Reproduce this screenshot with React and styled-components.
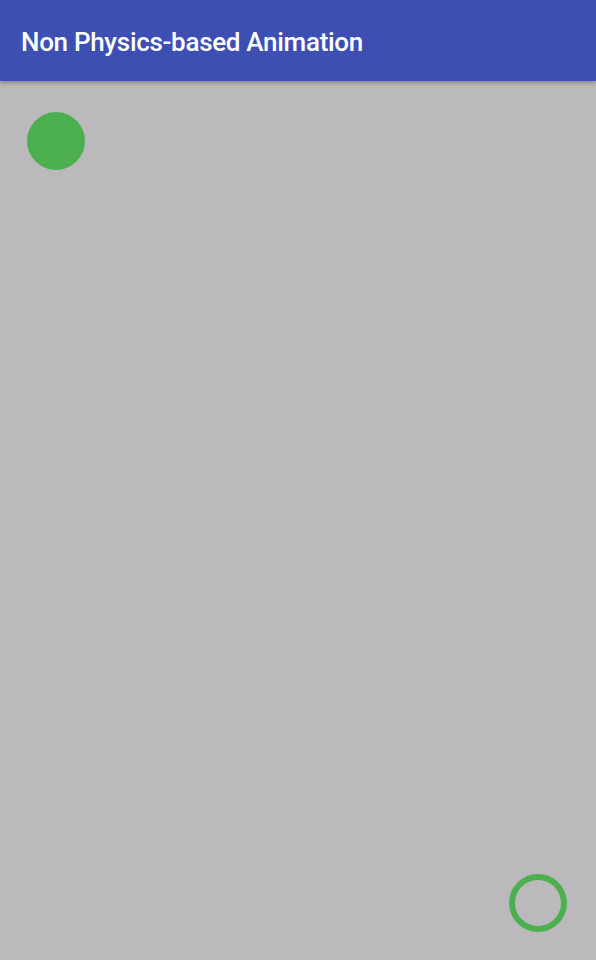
import React from 'react'
import styled, { createGlobalStyle } from 'styled-components'

const Global = createGlobalStyle`
  html, body {
    margin: 0;
    padding: 0;
    background: #bbb9bc;
  }
  body {
    font-family: Roboto, "Noto Sans", sans-serif;
  }
`

function App() {
  return (
    <>
      <Global />
      <Screen>
        <AppBar>
          <Title>Non Physics-based Animation</Title>
        </AppBar>
        <Stage>
          <Ball />
          <Target />
        </Stage>
      </Screen>
    </>
  )
}

export default App

const Screen = styled.div`
  width: 596px;
  height: 960px;
  display: flex;
  flex-direction: column;
  overflow: hidden;
`

const AppBar = styled.header`
  height: 81px;
  flex-shrink: 0;
  box-sizing: border-box;
  background: #3e4fb4;
  display: flex;
  align-items: center;
  padding: 3px 21px 0;
  box-shadow: 0 2px 4px rgba(0, 0, 0, 0.28);
  position: relative;
  z-index: 1;
`

const Title = styled.h1`
  margin: 0;
  color: #fff;
  font-size: 26px;
  font-weight: 500;
  letter-spacing: -0.3px;
`

const Stage = styled.main`
  flex: 1;
  display: flex;
  flex-direction: column;
  justify-content: space-between;
  padding: 31px 29px 28px 27px;
  background: #bbb9bc;
`

const Ball = styled.div`
  width: 58px;
  height: 58px;
  border-radius: 50%;
  background: #4cb050;
  align-self: flex-start;
`

const Target = styled.div`
  width: 58px;
  height: 58px;
  box-sizing: border-box;
  border-radius: 50%;
  border: 6px solid #4cb050;
  align-self: flex-end;
`
